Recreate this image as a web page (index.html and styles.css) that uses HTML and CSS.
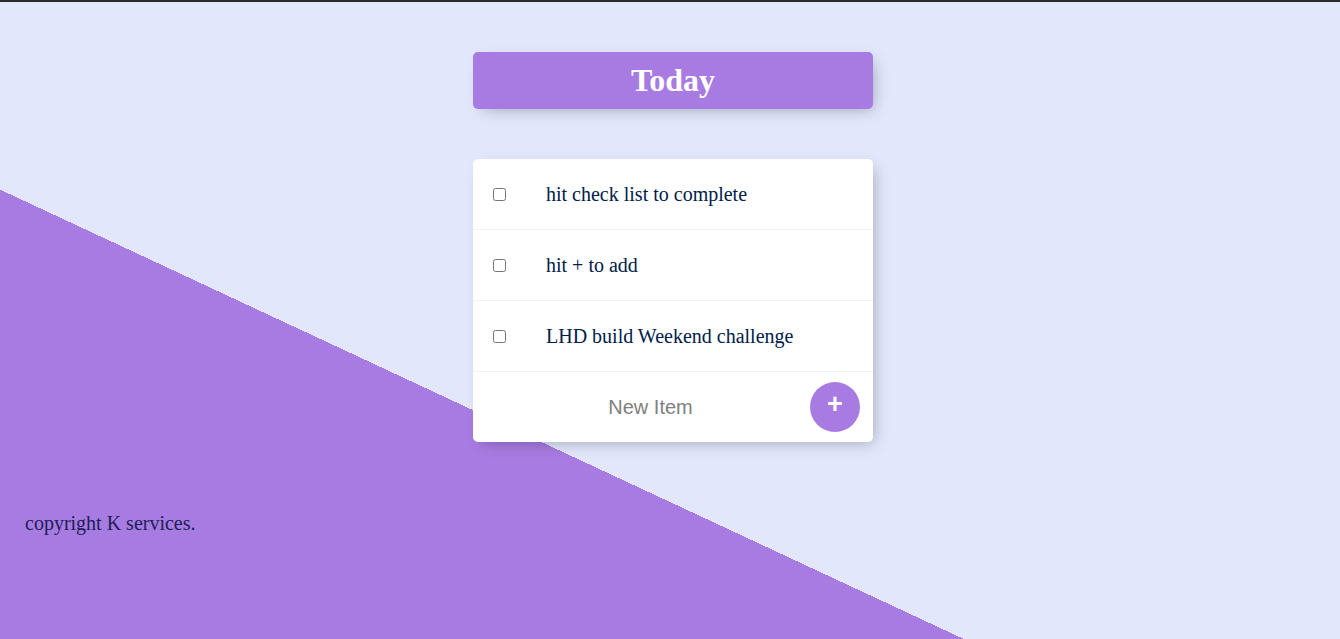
FILE: index.html
```html
<!DOCTYPE html>
<html lang="en">
<head>
<meta charset="utf-8">
<title>To-Do List</title>
<link rel="stylesheet" href="styles.css">
</head>
<body>
  <div class="box heading">
    <h1 class="heading-title">Today</h1>
  </div>

  <div class="box list">
    <div class="item">
      <input class="check" type="checkbox">
      <p class="item-text">hit check list to complete</p>
    </div>
    <div class="item">
      <input class="check" type="checkbox">
      <p class="item-text">hit + to add</p>
    </div>
    <div class="item">
      <input class="check" type="checkbox">
      <p class="item-text">LHD build Weekend challenge</p>
    </div>
    <form class="item add-form" onsubmit="return false;">
      <input class="new-item" type="text" name="newItem" placeholder="New Item" autocomplete="off">
      <button class="add-btn" type="submit">+</button>
    </form>
  </div>

  <footer class="footer">
    <p class="footer-text">copyright K services.</p>
  </footer>
</body>
</html>
```

FILE: styles.css
```css
html {
  background-color: #e2e7fc;
  background-image: linear-gradient(25deg, #a87be2 50%, #e2e7fc 50%);
  min-height: 1000px;
  border-top: 2px solid #2b2b2e;
  overflow: hidden;
  font-family: "Liberation Serif", "Times New Roman", serif;
}

body {
  margin: 0 2px 8px 8px;
}

.box {
  max-width: 400px;
  margin: 50px auto;
  background: #ffffff;
  border-radius: 5px;
  box-shadow: 5px 5px 15px -5px rgba(0, 0, 0, 0.3);
}

.heading {
  background-color: #a87be2;
  text-align: center;
}

.heading-title {
  margin: 0;
  padding: 10px;
  color: #ffffff;
  font-size: 32px;
  font-weight: 700;
}

.item {
  min-height: 70px;
  display: flex;
  align-items: center;
  border-bottom: 1px solid #f1f1f1;
}

.item:last-child {
  border-bottom: 0;
}

.check {
  margin: 20px;
  width: 13px;
  height: 13px;
}

.item-text {
  margin: 0;
  padding: 20px;
  font-size: 20px;
  font-weight: 400;
  color: #00204a;
}

.add-form {
  padding-left: 20px;
}

.new-item {
  box-sizing: border-box;
  flex: none;
  width: 297px;
  height: 60px;
  border: none;
  padding: 1px 2px 1px 20px;
  text-align: center;
  font-family: "Liberation Sans", Arial, sans-serif;
  font-size: 20px;
  color: #00204a;
  background: transparent;
}

.new-item:focus {
  outline: none;
  box-shadow: inset 0 -3px 0 0 #a87be2;
}

.new-item::placeholder {
  color: #808080;
  opacity: 1;
}

.add-btn {
  flex: none;
  margin-left: 20px;
  width: 50px;
  height: 50px;
  border-radius: 50%;
  border: 0;
  background-color: #a87be2;
  color: #ffffff;
  font-family: "Liberation Sans", Arial, sans-serif;
  font-size: 27px;
  font-weight: 700;
  line-height: 1;
  padding: 0 0 5px 0;
  cursor: pointer;
}

.footer-text {
  margin: 0;
  padding: 20px 20px 20px 17px;
  font-size: 20px;
  color: #1a1f55;
}
```
